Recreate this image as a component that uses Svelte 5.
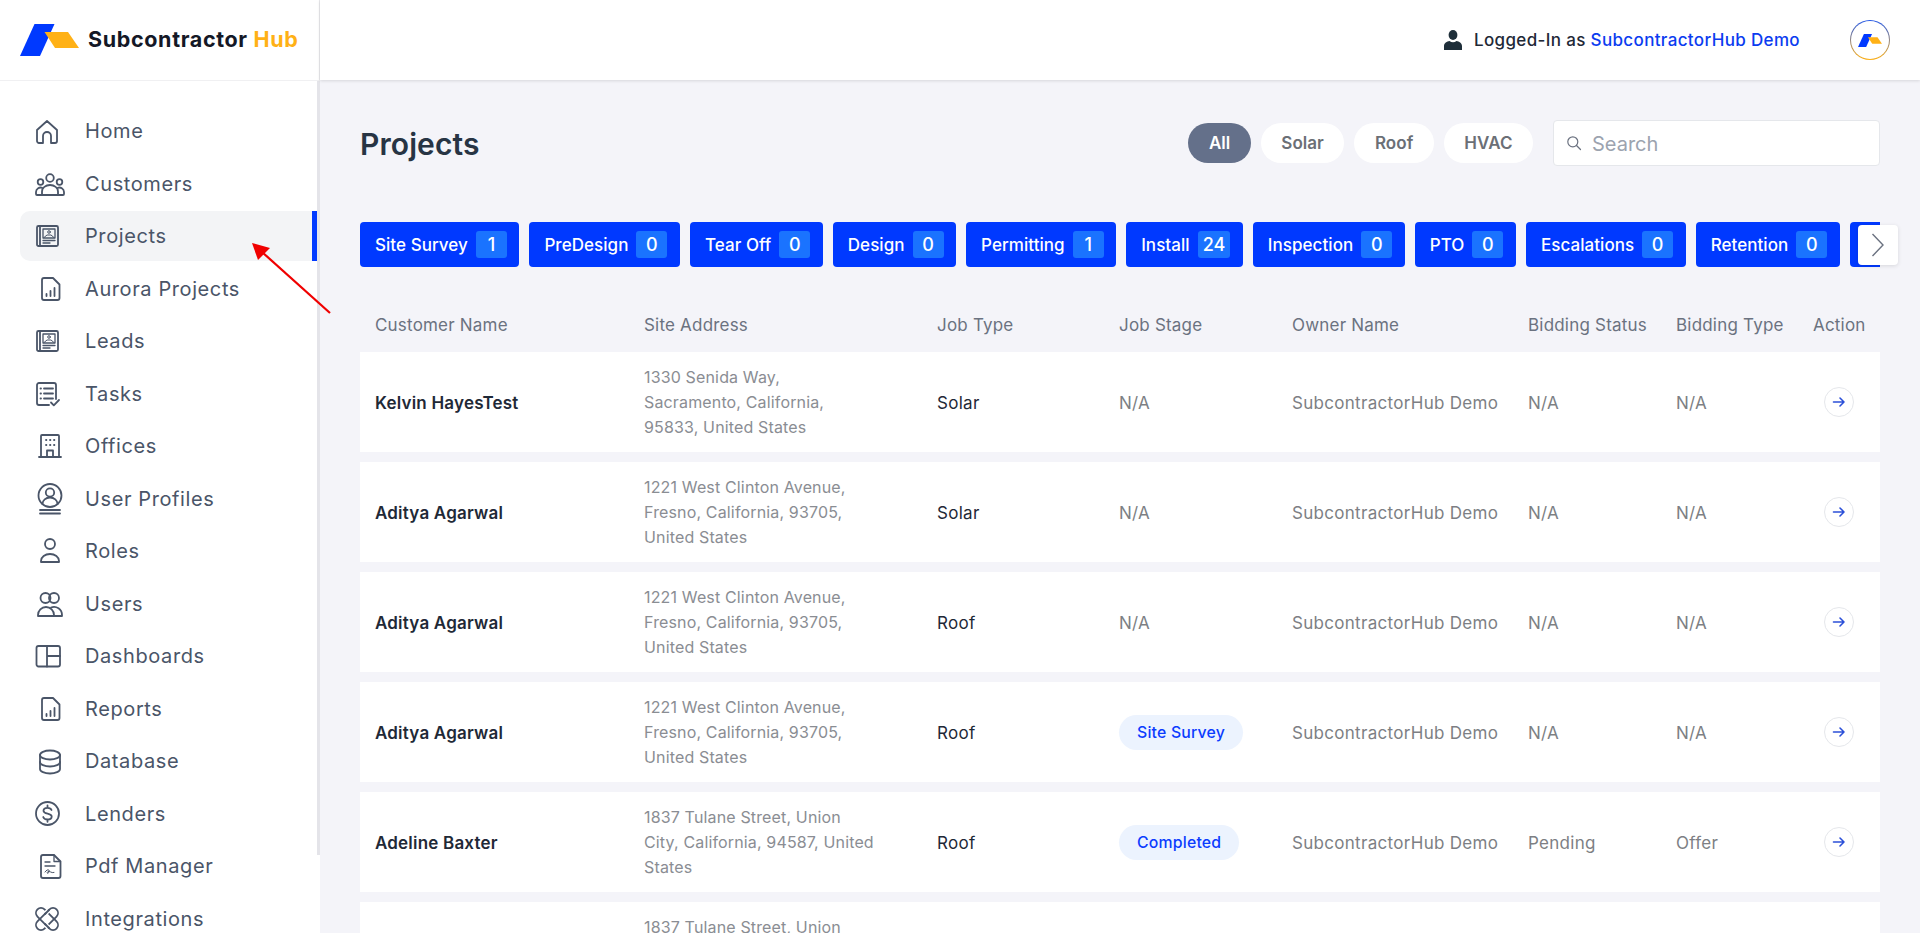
<script>
  const nav = ['Home','Customers','Projects','Aurora Projects','Leads','Tasks','Offices','User Profiles','Roles','Users','Dashboards','Reports','Database','Lenders','Pdf Manager','Integrations'];
  const stages = [['Site Survey',1],['PreDesign',0],['Tear Off',0],['Design',0],['Permitting',1],['Install',24],['Inspection',0],['PTO',0],['Escalations',0],['Retention',0],['Completed',0]];
  const heads = ['Customer Name','Site Address','Job Type','Job Stage','Owner Name','Bidding Status','Bidding Type','Action'];
  const clinton = ['1221 West Clinton Avenue,','Fresno, California, 93705,','United States'];
  const tulane = ['1837 Tulane Street, Union','City, California, 94587, United','States'];
  const rows = [
    {n:'Kelvin HayesTest',a:['1330 Senida Way,','Sacramento, California,','95833, United States'],t:'Solar',s:'',b:'N/A',y:'N/A'},
    {n:'Aditya Agarwal',a:clinton,t:'Solar',s:'',b:'N/A',y:'N/A'},
    {n:'Aditya Agarwal',a:clinton,t:'Roof',s:'',b:'N/A',y:'N/A'},
    {n:'Aditya Agarwal',a:clinton,t:'Roof',s:'Site Survey',b:'N/A',y:'N/A'},
    {n:'Adeline Baxter',a:tulane,t:'Roof',s:'Completed',b:'Pending',y:'Offer'},
    {n:'Adeline Baxter',a:tulane,t:'Roof',s:'Completed',b:'Pending',y:'Offer'}
  ];
</script>

{#snippet logo()}
  <polygon points="34.5,24 54.5,24 40,56 20,56" fill="#0039ff"/>
  <polygon points="44.5,32 68,32 79,48 55,48" fill="#ffb116"/>
{/snippet}

{#snippet icon(name)}
  <svg class="ic" viewBox="0 0 40 40" width="40" height="40" fill="none" stroke="currentColor" stroke-width="1.8" stroke-linecap="round" stroke-linejoin="round">
    {#if name==='Home'}
      <path d="M7 19 L17 10 L27 19 V30 a2 2 0 0 1-2 2 H21 V25 a4 4 0 0 0-8 0 V32 H9 a2 2 0 0 1-2-2Z"/>
    {:else if name==='Customers'}
      <circle cx="20" cy="14" r="3.8"/><circle cx="10.5" cy="18" r="2.8"/><circle cx="29.5" cy="18" r="2.8"/>
      <path d="M12 31 v-3.5 a8 6.5 0 0 1 16 0 V31"/><path d="M7 31 a1 1 0 0 1-1-1 v-2 a4.5 4.5 0 0 1 6.5-4 M33 31 a1 1 0 0 0 1-1 v-2 a4.5 4.5 0 0 0-6.5-4 M7 31 H33"/>
    {:else if name==='Projects' || name==='Leads'}
      <rect x="7" y="10" width="21" height="20" rx="1.5"/><path d="M10 10 V30"/><rect x="13" y="13" width="12" height="9" stroke-width="1.3"/>
      <circle cx="19" cy="16" r="1.3" stroke-width="1"/><path d="M14 21.5 l3-2.5 h4 l3 2.5" stroke-width="1"/><path d="M13 24.5 H25 M13 27 H20" stroke-width="1.3"/>
    {:else if name==='Aurora Projects' || name==='Reports'}
      <path d="M14 9 H23 L29.5 15.5 V29 a2 2 0 0 1-2 2 H14 a2 2 0 0 1-2-2 V11 a2 2 0 0 1 2-2Z"/><path d="M16.5 27 v-2 M20.5 27 v-5 M24.5 27 v-8" stroke-width="1.8"/>
    {:else if name==='Tasks'}
      <path d="M26 25 V11 a2 2 0 0 0-2-2 H9 a2 2 0 0 0-2 2 V29 a2 2 0 0 0 2 2 H19"/><path d="M14 14.5 H23 M14 19.5 H23 M14 24.5 H23"/><path d="M10.5 14.5 h.5 M10.5 19.5 h.5 M10.5 24.5 h.5"/><path d="M21 28.5 l2.8 2.8 L29 26"/>
    {:else if name==='Offices'}
      <path d="M11 31 V10 a1 1 0 0 1 1-1 H28 a1 1 0 0 1 1 1 V31"/><path d="M9 31 H31"/><path d="M17 31 V24.5 h6 V31"/><path d="M16 14 h.4 M20 14 h.4 M24 14 h.4 M16 19 h.4 M20 19 h.4 M24 19 h.4"/>
    {:else if name==='User Profiles'}
      <circle cx="20" cy="16.5" r="11.5"/><circle cx="20" cy="13.5" r="4.2"/><path d="M12.5 25 a7.5 6.5 0 0 1 15 0"/><path d="M10 31 H30 M10 34.5 H30"/>
    {:else if name==='Roles'}
      <circle cx="20" cy="13" r="5"/><path d="M11 31 v-1 a9 7 0 0 1 18 0 v1 Z"/>
    {:else if name==='Users'}
      <circle cx="15.5" cy="14" r="5"/><circle cx="24" cy="14" r="5"/><path d="M8 32 v-1 a8 8 0 0 1 16 0 v1 Z"/><path d="M21 23.5 a8 8 0 0 1 11 7.5 v1 H24"/>
    {:else if name==='Dashboards'}
      <rect x="6.5" y="10" width="23.5" height="20.5" rx="2"/><path d="M17 10 V30.5 M17 20 H30"/>
    {:else if name==='Database'}
      <ellipse cx="20" cy="14" rx="10" ry="4.5"/><path d="M10 14 V28 c0 2.5 4.5 4.5 10 4.5 s10-2 10-4.5 V14"/><path d="M10 21 c0 2.5 4.5 4.5 10 4.5 s10-2 10-4.5"/>
    {:else if name==='Lenders'}
      <circle cx="17.5" cy="19.5" r="11.5"/><path d="M21.5 16 c-.5-1.5-2-2.2-4-2.2 c-2.5 0-4 1.2-4 2.9 c0 4 8.2 1.8 8.2 5.8 c0 1.8-1.8 3-4.2 3 c-2.2 0-3.8-.9-4.3-2.5 M17.5 11.5 v2.3 M17.5 25.5 v2.3"/>
    {:else if name==='Pdf Manager'}
      <path d="M13 9 H24 L30.5 15.5 V30 a2 2 0 0 1-2 2 H13 a2 2 0 0 1-2-2 V11 a2 2 0 0 1 2-2Z"/><path d="M24 9 V15.5 H30.5" stroke-width="1.3"/><path d="M15 16 H20 M15 20 H25" stroke-width="1.3"/><path d="M15 26 c2-3 5-3 4 0 c-1 2.5-3 1-1 -.5 c2-1 3 2 6 1" stroke-width="1"/>
    {:else if name==='Integrations'}
      <rect x="3.5" y="15" width="27" height="10" rx="5" transform="rotate(45 17 20)"/><rect x="3.5" y="15" width="27" height="10" rx="5" transform="rotate(-45 17 20)"/>
      <path d="M15.4 11.3 L18.6 14.5 M15.4 28.7 L18.6 25.5" stroke="#fff" stroke-width="3" stroke-linecap="butt"/>
      <path d="M15 15 L19 11 M15 25 L19 29"/>
    {/if}
  </svg>
{/snippet}

<div class="page">
  <aside class="side">
    <div class="brand">
      <svg class="brandmark" viewBox="0 0 90 80" width="90" height="80">{@render logo()}</svg>
      <span class="brandtext">Subcontractor <b>Hub</b></span>
    </div>
    <nav class="nav">
      {#each nav as item}
        <div class="item" class:active={item==='Projects'}>
          {@render icon(item)}
          <span>{item}</span>
        </div>
      {/each}
    </nav>
    <div class="track"></div>
  </aside>

  <main class="main">
    <header class="top">
      <svg class="person" viewBox="0 0 18 20" width="18" height="20"><ellipse cx="9" cy="5" rx="4.4" ry="5" fill="#1f2f3a"/><path d="M0 20 V16 C0 13 3 11.5 5.5 11 C7.5 12.6 10.5 12.6 12.5 11 C15 11.5 18 13 18 16 V20Z" fill="#1f2f3a"/></svg>
      <span class="logged">Logged-In as <a>SubcontractorHub Demo</a></span>
      <div class="avatar">
        <svg viewBox="20 24 59 32" width="24" height="13">{@render logo()}</svg>
      </div>
    </header>

    <section class="content">
      <div class="titlerow">
        <h1>Projects</h1>
        <div class="filters">
          <span class="pill on">All</span><span class="pill">Solar</span><span class="pill">Roof</span><span class="pill">HVAC</span>
        </div>
        <div class="search">
          <svg viewBox="0 0 16 16" width="16" height="16" fill="none" stroke="#6b7280" stroke-width="1.2" stroke-linecap="round"><circle cx="6.8" cy="6.8" r="5"/><path d="M10.5 10.5 L14.5 14.5"/></svg>
          <span>Search</span>
        </div>
      </div>

      <div class="stagewrap">
        <div class="stages">
          {#each stages as [label,count]}
            <div class="stage"><span>{label}</span><em>{count}</em></div>
          {/each}
        </div>
        <div class="next"><svg viewBox="0 0 14 26" width="14" height="26" fill="none" stroke="#6b7280" stroke-width="1.4"><path d="M1.5 2 L12 13 L1.5 24"/></svg></div>
      </div>

      <div class="grid head">
        {#each heads as h}<div>{h}</div>{/each}
      </div>
      {#each rows as r}
        <div class="grid row">
          <div class="name">{r.n}</div>
          <div class="addr">{#each r.a as l}<div>{l}</div>{/each}</div>
          <div class="type">{r.t}</div>
          <div class="mut">{#if r.s}<span class="status">{r.s}</span>{:else}N/A{/if}</div>
          <div class="mut">SubcontractorHub Demo</div>
          <div class="mut">{r.b}</div>
          <div class="mut">{r.y}</div>
          <div><span class="go"><svg viewBox="0 0 14 14" width="14" height="14" fill="none" stroke="#2b4fd8" stroke-width="1.6" stroke-linecap="round" stroke-linejoin="round"><path d="M1.5 7 H12 M8 3 L12 7 L8 11"/></svg></span></div>
        </div>
      {/each}
    </section>
  </main>

  <svg class="pointer" width="1920" height="933" viewBox="0 0 1920 933">
    <path d="M330 313 L262 252" stroke="#f00000" stroke-width="2.2" fill="none"/>
    <polygon points="252,243 270,248 258,260" fill="#f00000"/>
  </svg>
</div>

<style>
  :global(body){margin:0;overflow:hidden;font-family:Inter,"Liberation Sans",sans-serif;}
  .page{display:flex;width:1920px;height:933px;overflow:hidden;position:relative;background:#f4f4f9;}
  .side{width:320px;flex:none;background:#fff;position:relative;display:flex;flex-direction:column;height:933px;}
  .brand{height:81px;box-sizing:border-box;border-bottom:1px solid #f0f0f2;border-right:1px solid #e9e9ec;display:flex;align-items:center;position:relative;flex:none;padding-bottom:2px;}
  .brandmark{position:absolute;left:0;top:0;}
  .brandtext{margin-left:88px;font-size:21.5px;font-weight:700;color:#141826;letter-spacing:.65px;white-space:nowrap;}
  .brandtext b{font-weight:700;color:#ffb116;}
  .nav{padding:25px 3px 0 20px;display:flex;flex-direction:column;gap:2.5px;}
  .item{height:50px;display:flex;align-items:center;gap:15px;padding-left:10px;color:#4a5568;font-size:20px;letter-spacing:.6px;border-radius:10px 0 0 10px;flex:none;}
  .item.active{background:#f3f4f6;box-shadow:inset -5px 0 0 #0039ff;}
  .ic{flex:none;}
  .track{position:absolute;right:0;top:81px;width:3px;height:774px;background:#e4e4e9;}
  .main{flex:1;min-width:0;display:flex;flex-direction:column;}
  .top{height:80px;flex:none;background:#fff;box-shadow:0 1px 3px rgba(0,0,0,.12);display:flex;align-items:center;justify-content:flex-end;padding-right:30px;position:relative;z-index:1;}
  .person{margin-right:12px;}
  .logged{font-size:17px;color:#1f2937;font-weight:500;margin-right:50px;white-space:nowrap;letter-spacing:.35px;}
  .logged a{color:#0b3cf0;}
  .avatar{width:40px;height:40px;box-sizing:border-box;border-radius:50%;display:flex;align-items:center;justify-content:center;border:1.5px solid transparent;background:linear-gradient(#fff,#fff) padding-box,linear-gradient(#1f55e8,#ffb116) border-box;}
  .content{padding:40px 40px 0;min-height:0;}
  .titlerow{display:flex;align-items:center;height:46px;}
  h1{margin:0;padding-top:2px;font-size:30px;font-weight:600;color:#273444;margin-right:auto;letter-spacing:.1px;}
  .filters{display:flex;gap:10px;margin-right:20px;}
  .pill{height:40px;box-sizing:border-box;padding:0 20.5px;border-radius:20px;background:#fff;color:#6b6f76;font-size:17px;font-weight:600;display:flex;align-items:center;letter-spacing:.05px;}
  .pill.on{background:#64708a;color:#fff;}
  .search{width:327px;height:46px;box-sizing:border-box;background:#fff;border:1px solid #e5e7eb;border-radius:4px;display:flex;align-items:center;gap:10px;padding-left:12px;color:#9ca3af;font-size:20px;}
  .search span{padding-top:2px;}
  .stagewrap{margin-top:56px;position:relative;height:45px;}
  .stages{display:flex;gap:10px;overflow:hidden;height:45px;}
  .stage{flex:none;height:45px;box-sizing:border-box;padding:0 12.5px 0 15px;background:#0039ff;color:#fff;border-radius:4px;display:flex;align-items:center;gap:8px;font-size:17px;font-weight:500;letter-spacing:.05px;}
  .stage em{font-style:normal;background:#1a73ff;border-radius:3px;height:27px;min-width:31px;box-sizing:border-box;padding:0 5px;display:flex;align-items:center;justify-content:center;font-size:18px;}
  .next{position:absolute;left:1498px;top:3px;width:40px;height:40px;background:#fff;border-radius:4px;box-shadow:0 1px 4px rgba(0,0,0,.12);display:flex;align-items:center;justify-content:center;}
  .grid{display:grid;grid-template-columns:269px 293px 182px 173px 236px 148px 137px 82px;align-items:center;}
  .grid>div{padding-left:15px;box-sizing:border-box;white-space:nowrap;}
  .head{padding:46px 0 15px;color:#6b7280;font-size:17px;line-height:24px;letter-spacing:.2px;}
  .row{height:100px;background:#fff;margin-bottom:10px;font-size:17px;letter-spacing:.3px;}
  .name{font-weight:600;color:#1f2937;padding-top:1px;letter-spacing:.2px;}
  .addr{font-size:16px;line-height:25px;color:#8a8d93;letter-spacing:.15px;}
  .type{color:#1f2937;padding-top:1px;}
  .mut{color:#7d7f84;padding-top:1px;}
  .status{display:inline-flex;align-items:center;height:35px;padding:0 18px;border-radius:18px;background:#ecf3fe;color:#0b3cff;font-size:15.8px;font-weight:500;letter-spacing:.2px;}
  .go{width:30px;height:30px;box-sizing:border-box;margin-left:11px;border:1px solid #e5e7eb;border-radius:50%;display:flex;align-items:center;justify-content:center;}
  .pointer{position:absolute;left:0;top:0;pointer-events:none;z-index:2;}
</style>
